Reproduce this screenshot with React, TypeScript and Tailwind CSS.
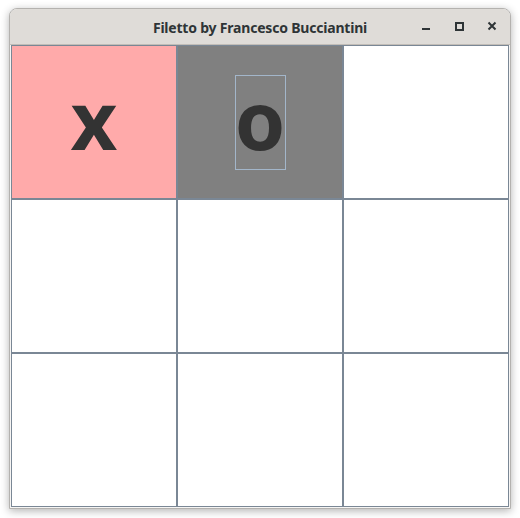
const cells: { mark: string; bg: string; focus?: boolean }[] = [
  { mark: 'x', bg: 'bg-[#ffaaaa]' },
  { mark: 'o', bg: 'bg-[#808080]', focus: true },
  { mark: '', bg: 'bg-white' },
  { mark: '', bg: 'bg-white' },
  { mark: '', bg: 'bg-white' },
  { mark: '', bg: 'bg-white' },
  { mark: '', bg: 'bg-white' },
  { mark: '', bg: 'bg-white' },
  { mark: '', bg: 'bg-white' },
]

export default function App() {
  return (
    <div className="h-[518px] w-[520px] bg-white pl-[9px] pt-[8px]">
      <div className="w-[502px] overflow-hidden rounded-t-[8px] border border-[#b4b2af] bg-[#f6f5f4] shadow-[0_2px_9px_rgba(0,0,0,0.3)]">
        {/* title bar */}
        <div className="relative flex h-[36px] items-center justify-center border-b border-[#c2bdb7] bg-[#dfdcd8]">
          <span className="pt-[1px] font-['Noto_Sans',sans-serif] text-[14px] font-bold tracking-[-0.2px] text-[#2e3436]">
            Filetto by Francesco Bucciantini
          </span>
          <div className="absolute right-[10px] top-[9px] flex gap-[17px]">
            <svg width="16" height="16" viewBox="0 0 16 16" className="text-[#2e3436]">
              <rect x="4" y="10" width="8" height="2" fill="currentColor" />
            </svg>
            <svg width="16" height="16" viewBox="0 0 16 16" className="text-[#2e3436]">
              <rect x="5" y="5" width="7" height="7" fill="none" stroke="currentColor" strokeWidth="2" />
            </svg>
            <svg width="16" height="16" viewBox="0 0 16 16" className="text-[#2e3436]">
              <path d="M4.5 4.5 L11.5 11.5 M11.5 4.5 L4.5 11.5" stroke="currentColor" strokeWidth="2" />
            </svg>
          </div>
        </div>
        {/* board */}
        <div className="px-[1px] pb-[1px]">
          <div className="grid grid-cols-3">
            {cells.map((cell, i) => (
              <div
                key={i}
                className={`flex h-[154px] items-center justify-center border border-[#7a8795] ${cell.bg}`}
              >
                {cell.mark && (
                  <span
                    className={`flex h-[95px] items-center justify-center font-['Noto_Sans',sans-serif] text-[81px] font-bold leading-none text-[#333333] ${
                      cell.focus ? 'w-[51px] border border-[#a3b6ca]' : ''
                    }`}
                  >
                    <span className="-mt-[7px]">{cell.mark}</span>
                  </span>
                )}
              </div>
            ))}
          </div>
        </div>
      </div>
    </div>
  )
}
